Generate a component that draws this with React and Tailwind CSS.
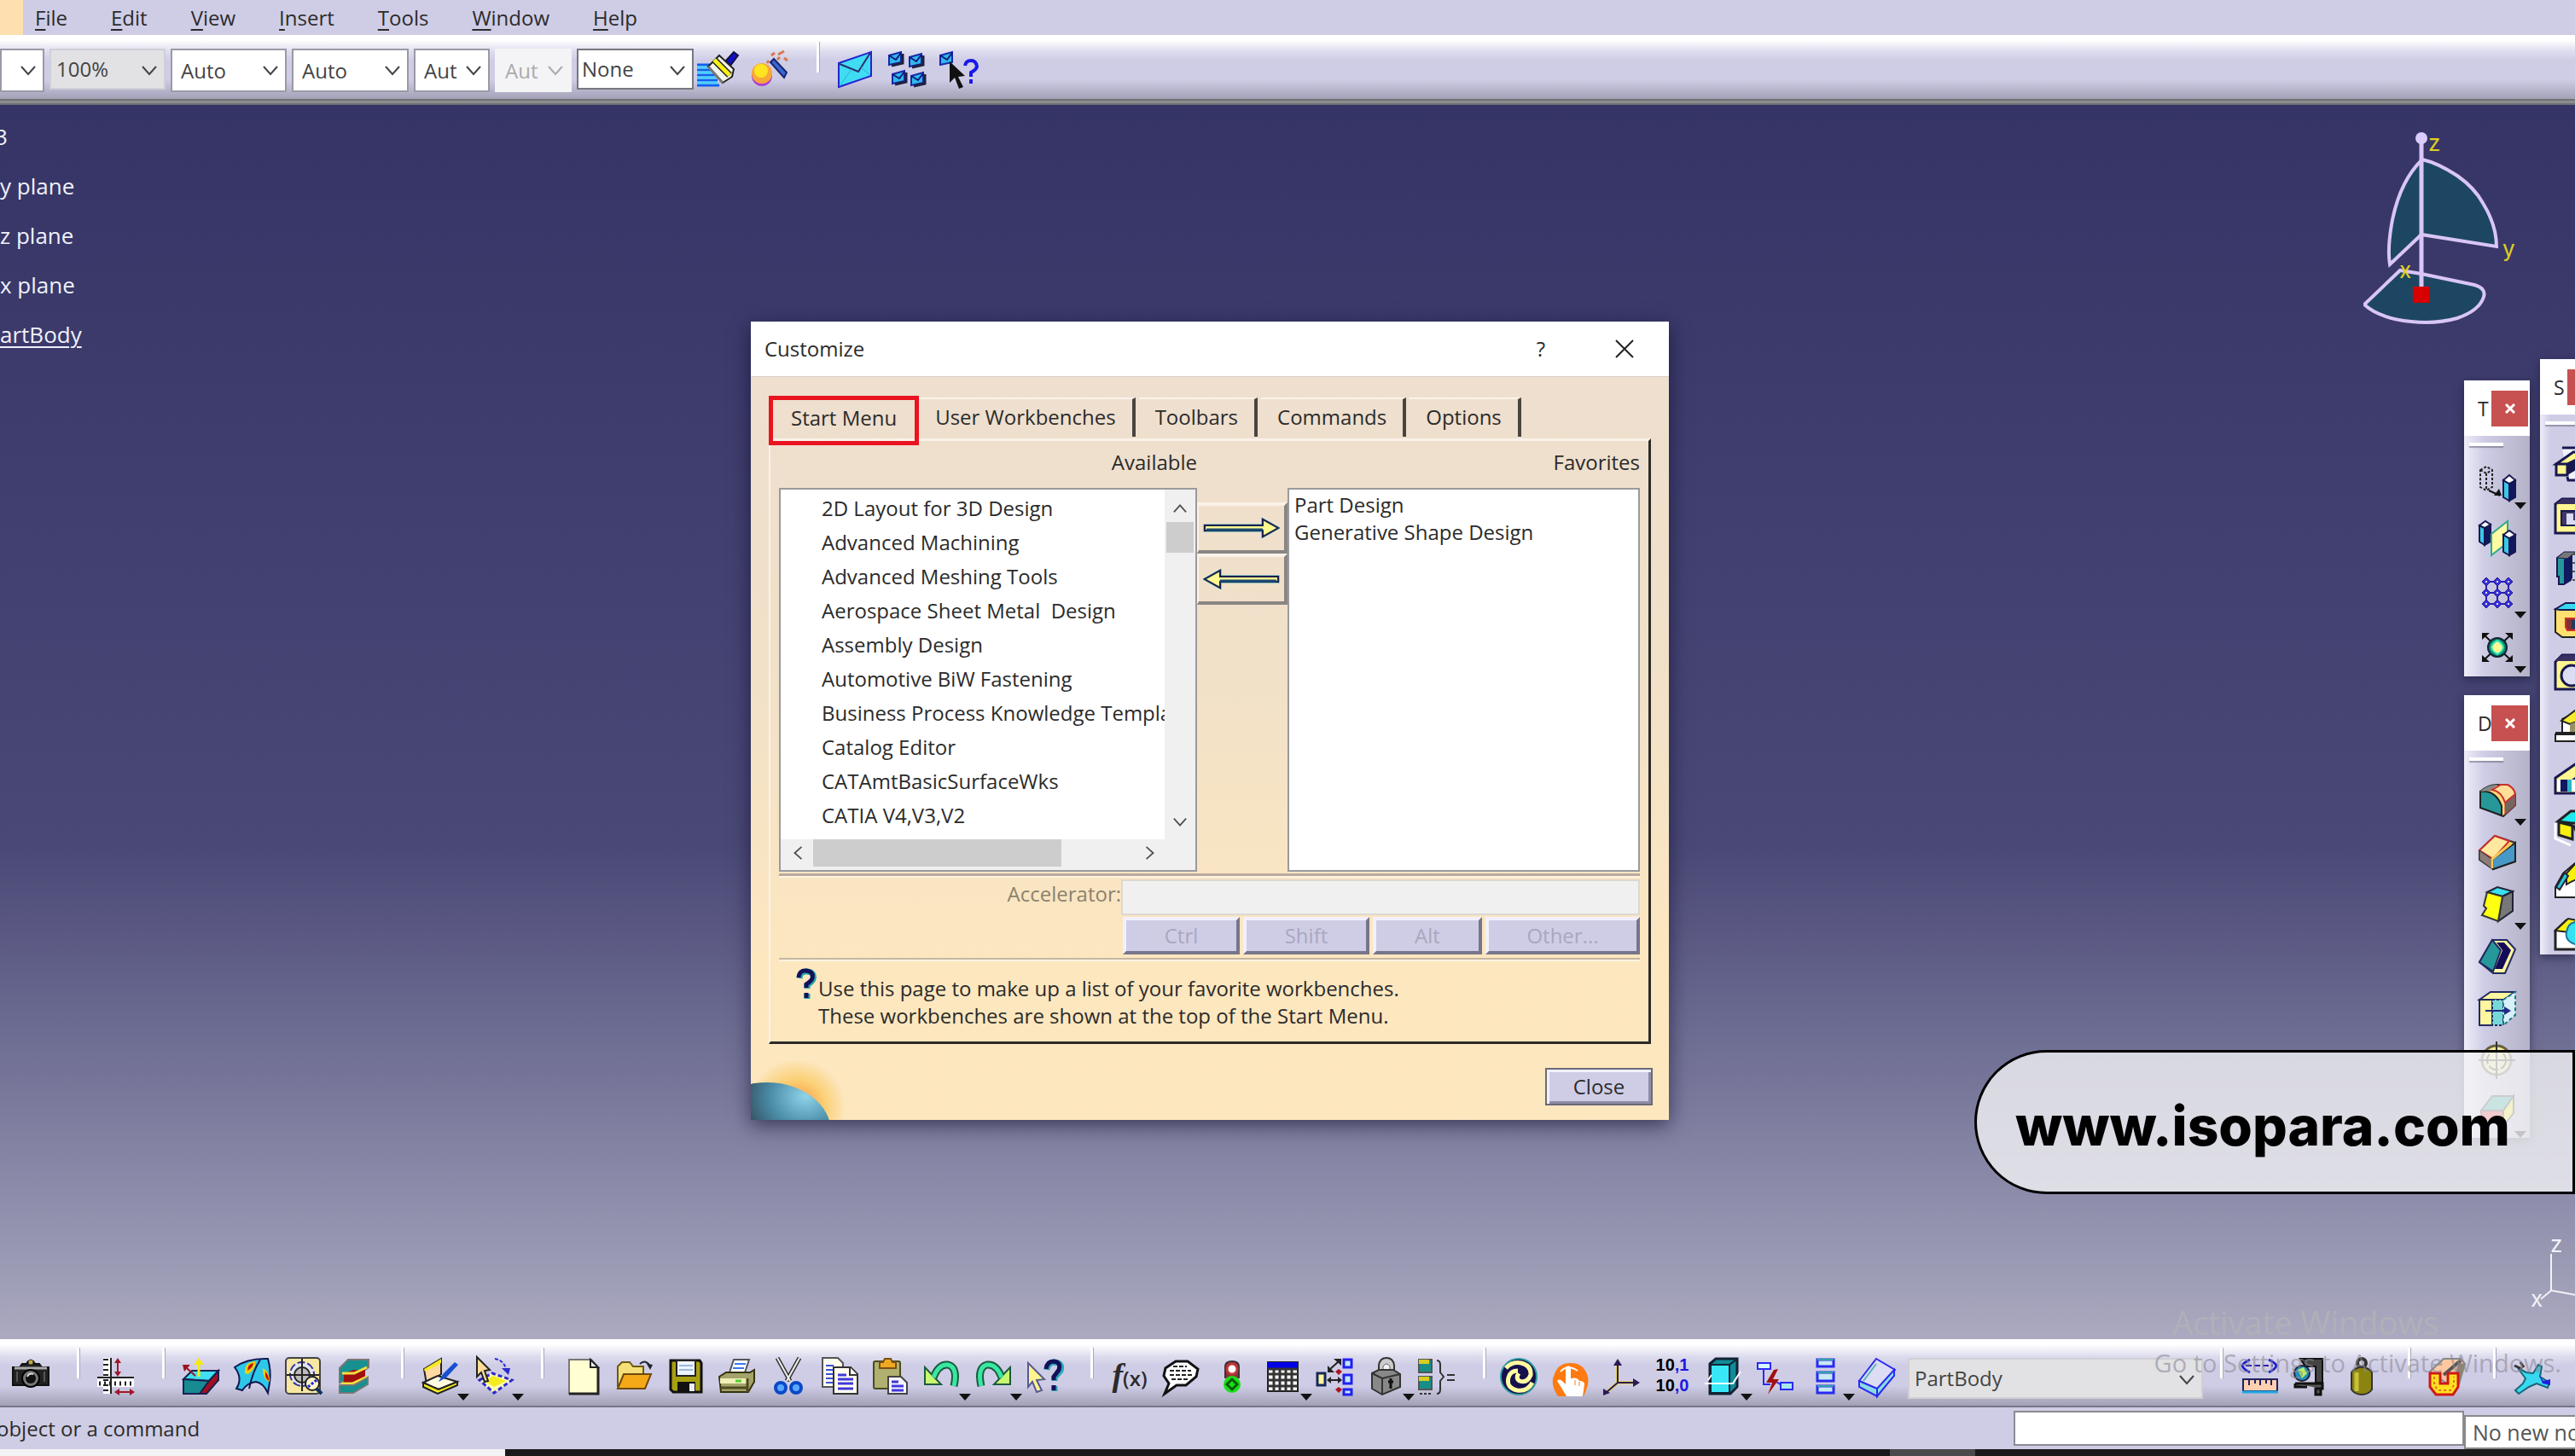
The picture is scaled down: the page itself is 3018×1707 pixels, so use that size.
import React, { useState } from 'react';

const WORKBENCHES = [
  '2D Layout for 3D Design',
  'Advanced Machining',
  'Advanced Meshing Tools',
  'Aerospace Sheet Metal  Design',
  'Assembly Design',
  'Automotive BiW Fastening',
  'Business Process Knowledge Templates',
  'Catalog Editor',
  'CATAmtBasicSurfaceWks',
  'CATIA V4,V3,V2',
];

const FAVORITES = ['Part Design', 'Generative Shape Design'];
const MENUS = ['File', 'Edit', 'View', 'Insert', 'Tools', 'Window', 'Help'];
const TABS = ['Start Menu', 'User Workbenches', 'Toolbars', 'Commands', 'Options'];

// Every glyph is drawn on a 44x44 canvas
const GLYPHS = {
  camera: (
    <>
      <path d="M1 13h8l3-4h5l2-3h6l2 3h5l3 4h8v21H1z" fill="#222" stroke="#111" strokeWidth="2" />
      <path d="M3 14h38" stroke="#aaa" strokeWidth="3" />
      <circle cx="22" cy="7" r="3" fill="#c9a93c" stroke="#333" />
      <circle cx="22" cy="26" r="10" fill="#777" stroke="#000" strokeWidth="2" />
      <circle cx="22" cy="26" r="6" fill="#111" />
      <path d="M18 24q2-5 7-3" stroke="#ddd" strokeWidth="2" fill="none" />
      <path d="M6 18v12M38 18v12" stroke="#555" strokeWidth="2" />
    </>
  ),
  rulers: (
    <>
      <path d="M7 2h9v42H7zM0 25h43v11H0z" fill="#fff" />
      <path d="M16 2v42M0 25h43" stroke="#222" strokeWidth="2" />
      <path d="M10 3v40" stroke="#222" strokeWidth="6" strokeDasharray="2 4" />
      <path d="M2 32h40" stroke="#222" strokeWidth="5" strokeDasharray="2 4" />
      <path d="M24 4v18M22 42h20" stroke="#a01828" strokeWidth="2" />
      <path d="M20 8l4-6 4 6zM20 18l4 6 4-6zM26 38l-6 4 6 4zM38 38l6 4-6 4z" fill="#a01828" />
    </>
  ),
  draftBlock: (
    <>
      <path d="M1 27l10-10h31l-11 12z" fill="#3fe0f0" stroke="#1a2050" strokeWidth="2" />
      <path d="M1 27l30 2-8 15H1z" fill="#178a92" stroke="#1a2050" strokeWidth="2" />
      <path d="M42 17L31 29 20 44h8l14-16z" fill="#a01020" stroke="#1a2050" strokeWidth="2" />
      <path d="M19 24V8" stroke="#f5ea10" strokeWidth="3" />
      <path d="M13 10l6-8 6 8z" fill="#f5ea10" />
      <path d="M15 23L5 14" stroke="#a01020" strokeWidth="2" />
      <path d="M0 10h9l-7 8z" fill="#a01020" />
    </>
  ),
  curvature: (
    <>
      <path d="M1 13Q16 2 40 3q4 14 2 28l-2 12q-6-12-14-13-10 1-16 10l-7-2Q11 26 1 13z" fill="#2cc8ea" stroke="#101850" strokeWidth="2" />
      <path d="M13 20Q12 7 25 6q2 7-8 15z" fill="#f0d000" />
      <path d="M16 17q0-8 7-9 0 5-7 9z" fill="#c01010" />
      <path d="M34 14q8 4 8 16-8-2-8-16z" fill="#f0d000" />
      <path d="M37 18q4 4 4 11-5-3-4-11z" fill="#c01010" />
      <path d="M31 4Q22 18 18 38" stroke="#101850" strokeWidth="2" fill="none" />
    </>
  ),
  tapThread: (
    <>
      <rect x="1" y="2" width="40" height="42" rx="4" fill="#f7e7a0" stroke="#444" strokeWidth="2" />
      <circle cx="20" cy="21" r="14" fill="#e4e4ee" stroke="#3030a0" strokeWidth="2" strokeDasharray="9 3" />
      <circle cx="20" cy="22" r="9" fill="#bbb" stroke="#222" strokeWidth="2" />
      <path d="M20 3v38M2 22h38" stroke="#222" strokeWidth="2" />
      <circle cx="32" cy="32" r="8" fill="#fff6c8" stroke="#222" strokeWidth="2" />
      <path d="M27 36l10-8" stroke="#2020e0" strokeWidth="3" strokeDasharray="3 2" />
      <path d="M37 38l6 6" stroke="#103060" strokeWidth="4" />
    </>
  ),
  wallThickness: (
    <>
      <path d="M4 14L14 4h24v9L26 22H12v8l-8 1z" fill="#179090" stroke="#777" strokeWidth="2" />
      <path d="M9 20L20 16h14v14l-12 4H9z" fill="#a01010" />
      <path d="M7 20h14l15-7M6 32h13l17-8" stroke="#f2e040" strokeWidth="3" fill="none" />
      <path d="M4 34h17l16-9v8L20 43H4z" fill="#179090" stroke="#777" strokeWidth="2" />
    </>
  ),
  sketch: (
    <>
      <path d="M3 15L23 3v18L6 33z" fill="#ffd9a0" stroke="#222" strokeWidth="2" />
      <path d="M3 15L23 3v5L4 18z" fill="#f5ec20" />
      <path d="M2 31l17-8 23 7-22 9z" fill="#fffde0" stroke="#222" strokeWidth="2" />
      <path d="M2 31v5l17 8 23-10v-4l-22 9z" fill="#f5ec20" stroke="#222" strokeWidth="2" />
      <path d="M20 30l5-9L39 7l4 3-14 15z" fill="#1750d0" />
    </>
  ),
  positionedSketch: (
    <>
      <path d="M4 28l15-8 23 8-21 15z" fill="#fffbb0" stroke="#2a2ad0" strokeWidth="3" strokeDasharray="5 3" />
      <path d="M10 29l10-6 15 6-14 7z" fill="#f5ec20" />
      <path d="M1 1l15 15-6 1 4 12-4 1-4-11-5 5z" fill="#ffdc98" stroke="#222" strokeWidth="2" />
      <path d="M22 3q11 2 14 14" stroke="#2a2ad0" strokeWidth="2" strokeDasharray="4 2" fill="none" />
      <path d="M30 14h10l-2 8z" fill="#2a2ad0" />
    </>
  ),
  newFile: (
    <>
      <path d="M5 4h26l8 9v31H5z" fill="#ffffd2" stroke="#777" strokeWidth="2" />
      <path d="M39 13v31H5" stroke="#222" strokeWidth="3" fill="none" />
      <path d="M30 4v9h9z" fill="#fff" stroke="#222" strokeWidth="2" />
    </>
  ),
  openFile: (
    <>
      <path d="M2 36V12l5-5h9l4 5h12v10" fill="#f5df78" stroke="#6d5a10" strokeWidth="2" />
      <path d="M2 38l7-17h32l-7 17z" fill="#f5a818" stroke="#6d4a10" strokeWidth="2" />
      <path d="M28 9q7-6 12 3" stroke="#223" strokeWidth="2" fill="none" />
      <path d="M36 9l7 1-3 6z" fill="#223" />
    </>
  ),
  save: (
    <>
      <path d="M4 5h34l2 3v34H7l-3-3z" fill="#a8a010" stroke="#111" strokeWidth="3" />
      <path d="M11 5h22v18H11z" fill="#eef4ff" stroke="#222" strokeWidth="2" />
      <path d="M14 11h16M14 16h16" stroke="#9db8e0" strokeWidth="2" />
      <path d="M12 30h21v12H12z" fill="#111" />
      <path d="M26 32h6v9h-6z" fill="#eee" />
    </>
  ),
  print: (
    <>
      <path d="M12 22l6-18h18l-6 18z" fill="#fff" stroke="#555" strokeWidth="2" />
      <path d="M19 9h13M17 14h13M16 19h12" stroke="#3478f0" strokeWidth="2" />
      <path d="M1 24l8-5h28l5-3v14l-7 12H3z" fill="#a3a36a" stroke="#33330f" strokeWidth="2" />
      <path d="M2 26h32v6H2z" fill="#eef0b8" />
      <path d="M3 37h30M34 26v16" stroke="#4c4c20" strokeWidth="3" />
      <path d="M20 29h7" stroke="#50d030" strokeWidth="3" />
    </>
  ),
  cut: (
    <>
      <path d="M9 2l15 27M35 2L20 29" stroke="#333" strokeWidth="5" />
      <path d="M9 2l15 27M35 2L20 29" stroke="#eee" strokeWidth="2" />
      <circle cx="13" cy="37" r="6" fill="#5aa8ff" stroke="#0a48c8" strokeWidth="4" />
      <circle cx="31" cy="37" r="6" fill="#5aa8ff" stroke="#0a48c8" strokeWidth="4" />
    </>
  ),
  copy: (
    <>
      <path d="M2 2h18l6 6v28H2z" fill="#fffff0" stroke="#555" strokeWidth="2" />
      <path d="M6 11h9M6 16h9M6 21h9M6 26h9M6 31h9" stroke="#3a50d8" strokeWidth="2" />
      <path d="M15 13h20l8 8v23H15z" fill="#fffff0" stroke="#333" strokeWidth="2" />
      <path d="M34 13v9h9" fill="#fff" stroke="#333" strokeWidth="2" />
      <path d="M20 22h10M20 27h18M20 32h18M20 38h18" stroke="#4038d8" strokeWidth="3" />
    </>
  ),
  paste: (
    <>
      <rect x="2" y="6" width="31" height="32" rx="2" fill="#b0b070" stroke="#4a4a20" strokeWidth="2" />
      <path d="M9 11v-4h4l2-4h7l2 4h4v7H9z" fill="#f0a820" stroke="#7a5010" strokeWidth="2" />
      <path d="M19 24h15l7 7v13H19z" fill="#f4f4ff" stroke="#444" strokeWidth="2" />
      <path d="M23 30h8M23 35h14M23 40h14" stroke="#4038d8" strokeWidth="3" />
    </>
  ),
  undo: (
    <>
      <path d="M12 25Q18 9 29 10q12 3 7 25" stroke="#1c5a40" strokeWidth="9" fill="none" />
      <path d="M2 13v20h19z" fill="#c8f870" stroke="#1c5a40" strokeWidth="2" />
      <path d="M12 25Q18 9 29 10q12 3 7 25" stroke="#38e8a0" strokeWidth="5" fill="none" />
    </>
  ),
  redo: (
    <>
      <path d="M32 25Q26 9 15 10 3 13 8 35" stroke="#1c5a40" strokeWidth="9" fill="none" />
      <path d="M42 13v20H23z" fill="#c8f870" stroke="#1c5a40" strokeWidth="2" />
      <path d="M32 25Q26 9 15 10 3 13 8 35" stroke="#38e8a0" strokeWidth="5" fill="none" />
    </>
  ),
  whatsThis: (
    <>
      <path d="M3 8l19 19-9 1 6 12-6 2-5-12-5 6z" fill="#fff490" stroke="#555a90" strokeWidth="2" />
      <path d="M25 16q1-9 9-9 10 1 7 10l-7 8v4M34 35v6" stroke="#28a8b8" strokeWidth="7" fill="none" />
      <path d="M24 15q1-9 9-9 9 1 6 10l-6 8v4M33 34v6" stroke="#14105a" strokeWidth="5" fill="none" />
    </>
  ),
  bubble: (
    <>
      <path d="M16 6h14l12 9-2 9-12 10H17L3 44l5-12-6-9 2-9z" fill="#fff" stroke="#111" strokeWidth="3" />
      <path d="M13 12h16M9 17h25M9 22h26M11 27h20" stroke="#222" strokeWidth="2" strokeDasharray="5 2" />
    </>
  ),
  trafficLight: (
    <>
      <path d="M14 26V12q0-6 8-6t8 6v14" fill="#8a3038" stroke="#45303a" strokeWidth="2" />
      <circle cx="22" cy="15" r="6" fill="#fff" stroke="#c03838" strokeWidth="3" />
      <circle cx="22" cy="33" r="10" fill="#18e018" />
      <path d="M22 27l6 6-6 6-6-6z" fill="#18e018" stroke="#0a5a0a" strokeWidth="3" />
    </>
  ),
  table: (
    <>
      <path d="M4 7h35v34H4z" fill="#fff" stroke="#222" strokeWidth="2" />
      <path d="M4 7h35v7H4z" fill="#0000e8" />
      <path d="M4 15h35M4 21h35M4 28h35M4 35h35M11 14v27M18 14v27M25 14v27M32 14v27" stroke="#333" strokeWidth="3" />
    </>
  ),
  relations: (
    <>
      <path d="M2 20h9v14H2z" fill="#fff6a0" stroke="#182858" strokeWidth="3" />
      <path d="M33 4h9v9h-9zM33 22h9v10h-9zM33 39h9v6h-9z" fill="#bfe8ff" stroke="#2020f0" strokeWidth="3" />
      <path d="M16 16L27 6M15 28h14" stroke="#222" strokeWidth="2" />
      <path d="M21 3h9v8zM14 11v8h8zM18 24l-5 4 5 4zM26 24l5 4-5 4z" fill="#222" />
      <path d="M23 18l4-3 4 3-4 4zM23 39l4-3 4 3-4 4z" fill="#b01020" />
    </>
  ),
  lock: (
    <>
      <path d="M14 21V11q1-9 9-9t9 9v12" fill="#ccc" stroke="#333" strokeWidth="2" />
      <path d="M19 22V12q4-6 8 0v10" fill="#f2f2f2" stroke="#666" />
      <path d="M6 20l8-4h17l8 5v15l-21 9-12-7z" fill="#888" stroke="#333" strokeWidth="2" />
      <path d="M6 20l12 6 21-5M18 26v18" stroke="#333" strokeWidth="2" fill="none" />
      <path d="M28 26v12M25 30h6" stroke="#111" strokeWidth="3" />
    </>
  ),
  equations: (
    <>
      <path d="M1 4h15v15H1zM1 24h15v15H1z" fill="#178f88" stroke="#555" strokeWidth="2" />
      <path d="M1 4h12v5H1zM1 24h12v5H1z" fill="#d8cc20" />
      <path d="M2 44h13" stroke="#333" strokeWidth="2" strokeDasharray="3 2" />
      <path d="M22 5q4 0 4 5v9l4 5-4 5v10q0 5-4 5M34 22h9M34 28h9" stroke="#333" strokeWidth="2" fill="none" />
    </>
  ),
  update: (
    <>
      <circle cx="22" cy="24" r="21" fill="#14104e" stroke="#2a9aa0" strokeWidth="2" />
      <path d="M7 14Q14 6 25 8q12 3 11 14-4 10-13 7-5-3-1-9" stroke="#fffba0" strokeWidth="5" fill="none" />
      <path d="M38 31Q32 42 20 40 7 37 10 25q2-8 11-8" stroke="#fffba0" strokeWidth="5" fill="none" />
    </>
  ),
  hand: (
    <>
      <path d="M8 47Q-2 32 4 21q4-13 19-13 14 0 19 13 3 8 0 16l-4 10H10z" fill="#ff7a10" />
      <path d="M18 47l-6-10-5-8q3-4 8 2l2 2V13q4-4 6 1v12q8-2 10 3 6 0 6 4l-2 14z" fill="#fff" />
      <path d="M11 18q8-9 20-1" stroke="#fff" strokeWidth="2" fill="none" />
      <path d="M28 28v6M33 30v5" stroke="#ff7a10" strokeWidth="1" />
    </>
  ),
  axes: (
    <>
      <path d="M18 5v26h22M18 31L4 43" stroke="#e8d860" strokeWidth="4" fill="none" />
      <path d="M18 5v26h22M18 31L4 43" stroke="#2a1a58" strokeWidth="2" fill="none" />
      <path d="M13 11l5-8 5 8zM36 26l8 5-8 5zM1 38v8l8-3z" fill="#2a1a58" />
    </>
  ),
  section: (
    <>
      <path d="M6 9l7-6h25v33l-8 8H6z" fill="#128a98" stroke="#123" strokeWidth="3" />
      <path d="M7 10h22v33H7z" fill="#38e8f8" stroke="#123" strokeWidth="2" />
      <path d="M29 10l8-6" stroke="#123" strokeWidth="2" />
      <path d="M0 32h33l9-14M4 28l4-6" stroke="#fff" strokeWidth="2" fill="none" />
    </>
  ),
  breakLink: (
    <>
      <path d="M2 8h15v7H2z" fill="#d8f4ff" stroke="#2a2af0" strokeWidth="2" />
      <path d="M9 15v18h8M24 30l6 4" stroke="#2a2af0" strokeWidth="2" fill="none" />
      <path d="M29 31h14v8H29z" fill="#a8e8f0" stroke="#2a2af0" strokeWidth="2" />
      <path d="M21 16l-9 15h7l-5 14 13-18h-7l6-12z" fill="#a01010" />
    </>
  ),
  stack: (
    <>
      <path d="M12 4h19v8H12zM12 19h19v10H12zM12 35h19v8H12z" fill="#c8e8f4" stroke="#2a2af0" strokeWidth="3" />
      <path d="M12 4h19M12 19h19M12 35h19" stroke="#30a0a8" strokeWidth="2" />
    </>
  ),
  body: (
    <>
      <path d="M1 29L21 3l22 13-20 23z" fill="#dcdcf4" stroke="#2a2af0" strokeWidth="2" />
      <path d="M1 29v7l21 11V38zM22 47l20-24v-7L22 38z" fill="#8adce0" stroke="#2a2af0" strokeWidth="2" />
      <path d="M6 29L21 9" stroke="#50b8b8" strokeWidth="2" />
    </>
  ),
  ruler: (
    <>
      <path d="M6 11h32" stroke="#2a20a8" strokeWidth="2" strokeDasharray="7 3" />
      <path d="M11 4q-8 4-9 7 1 4 9 8M33 4q8 4 9 7-1 4-9 8" stroke="#2020d0" strokeWidth="3" fill="none" />
      <path d="M3 27h40v14H3z" fill="#ffd0b0" stroke="#202060" strokeWidth="2" />
      <path d="M2 42h42" stroke="#20a8e0" strokeWidth="3" />
      <path d="M10 28v6M17 28v4M23 28v6M30 28v4M36 28v6" stroke="#202060" strokeWidth="2" />
    </>
  ),
  clamp: (
    <>
      <path d="M10 3h26v28h-8V12H16z" fill="#444" stroke="#111" strokeWidth="2" />
      <path d="M4 32h32v6h-8v7h6v-7M4 32v4h14" fill="#555" stroke="#111" strokeWidth="3" />
      <circle cx="12" cy="20" r="9" fill="#2090c0" stroke="#223" strokeWidth="2" />
      <path d="M7 16l7-3 4 7-6 6z" fill="#b8f060" />
    </>
  ),
  weight: (
    <>
      <circle cx="22" cy="8" r="5" fill="none" stroke="#333" strokeWidth="4" />
      <path d="M10 19q4-6 12-6t12 6v20q-4 6-12 6t-12-6z" fill="#8c8410" stroke="#333" strokeWidth="2" />
      <path d="M16 19v22" stroke="#c8c038" strokeWidth="5" />
    </>
  ),
  groove: (
    <>
      <path d="M2 18L18 3h20l5 6-7 24-10 2z" fill="#ffc8a0" stroke="#888" strokeWidth="2" />
      <path d="M36 8l7 1-7 24-4 2V20z" fill="#8c8478" />
      <path d="M18 22L38 5" stroke="#555" strokeWidth="4" />
      <path d="M2 20h12v12h9V20h12v16l-6 9H9l-7-9z" fill="#ffe020" stroke="#d01818" strokeWidth="3" />
      <path d="M7 24v10l5 6h14l4-6V24" stroke="#e87018" strokeWidth="2" strokeDasharray="3 3" fill="none" />
    </>
  ),
  plane: (
    <>
      <path d="M5 14l10 5 8 1 6-10 4 2-2 12 11 7-2 6-13-5-9 4-12 8-4-4 9-8 3-6z" fill="#38d8f0" stroke="#186878" strokeWidth="2" />
      <path d="M1 11l9 4M8 7l4 6" stroke="#333" strokeWidth="3" />
      <path d="M30 22l5 7 8-2v7l-9-2z" fill="#2020e0" />
    </>
  ),
  paintBrush: (
    <>
      <path d="M0 17h16M0 23h18M0 29h22M0 35h24M0 41h26" stroke="#1060f0" strokeWidth="3" />
      <path d="M0 20h14M0 26h18M0 32h22M0 38h24" stroke="#48d0ff" strokeWidth="3" />
      <path d="M34 12l9-10 5 4-9 12z" fill="#1010c8" stroke="#101040" strokeWidth="2" />
      <path d="M26 6l17 16-2 9-11 7L13 19z" fill="#f4f4ec" stroke="#222" strokeWidth="2" />
      <path d="M20 11l18 18" stroke="#222" strokeWidth="8" />
      <path d="M20 11l18 18" stroke="#f8f010" strokeWidth="5" />
      <path d="M13 19l17 19" stroke="#777" strokeWidth="3" />
    </>
  ),
  wand: (
    <>
      <circle cx="12" cy="30" r="12" fill="#b040d0" />
      <circle cx="12" cy="27" r="12" fill="#f7a838" />
      <circle cx="11" cy="24" r="8" fill="#ffe420" />
      <path d="M22 14l4-4 15 16-3 6z" fill="#3868d0" stroke="#1a2470" strokeWidth="2" />
      <path d="M23 6l4-3M31 5l7-4M20 12l-2 3M38 9l4 3M30 11l3-3" stroke="#d87850" strokeWidth="3" />
    </>
  ),
  mail: (
    <>
      <path d="M2 15L40 2v28L2 43z" fill="#40dcf4" stroke="#2424d0" strokeWidth="2" />
      <path d="M3 16l22 9L39 3" stroke="#28306c" strokeWidth="2" fill="none" />
      <path d="M3 42l14-20M39 29L28 20" stroke="#30b0d0" strokeWidth="1" fill="none" />
    </>
  ),
  mailGrid: (
    <>
      <path d="M1 6l14-4v12L1 17zM25 8l14-4v12l-14 3zM5 28l14-4v12L5 39zM27 30l14-4v12l-14 3z" fill="#30b8e8" stroke="#1428a8" strokeWidth="2" />
      <path d="M17 4v11L4 18M41 6v11l-13 3M21 26v11L8 40M43 28v11l-13 3" stroke="#202040" strokeWidth="3" fill="none" />
      <path d="M1 6l8 5 6-8M25 8l8 5 6-8M5 28l8 5 6-8M27 30l8 5 6-8" stroke="#101880" strokeWidth="2" fill="none" />
    </>
  ),
  mailHelp: (
    <>
      <path d="M1 6l14-4v12L1 17z" fill="#30b8e8" stroke="#1428a8" strokeWidth="2" />
      <path d="M1 6l8 5 6-8" stroke="#101880" strokeWidth="2" fill="none" />
      <path d="M12 13l18 17-8 1 6 12-5 2-5-13-6 6z" fill="#111" />
      <path d="M30 18q1-6 7-6t7 7q-1 4-7 7v5M37 34v5" stroke="#1818e8" strokeWidth="4" fill="none" />
    </>
  ),
  translate: (
    <>
      <path d="M2 6l7-4 7 4v20l-7 4-7-4zM2 6l7 4 7-4M9 10v20" fill="none" stroke="#222" strokeWidth="2" strokeDasharray="3 2" />
      <path d="M12 30l13 6" stroke="#111" strokeWidth="2" />
      <path d="M18 36h9l-3-8z" fill="#111" />
      <path d="M29 18l7 4v20l-7-4z" fill="#38c8e8" stroke="#181850" strokeWidth="2" />
      <path d="M36 22l7-4v20l-7 4z" fill="#101860" stroke="#181850" strokeWidth="2" />
      <path d="M29 18l7-6 7 6-7 4z" fill="#fff" stroke="#181850" strokeWidth="2" />
    </>
  ),
  mirror: (
    <>
      <path d="M1 7l6 3v20l-6-4z" fill="#38c8e8" stroke="#181850" strokeWidth="2" />
      <path d="M7 10l7-4v20l-7 4z" fill="#101860" stroke="#181850" strokeWidth="2" />
      <path d="M1 7l7-5 6 4-7 4z" fill="#fff" stroke="#181850" strokeWidth="2" />
      <path d="M15 17L34 2v25L15 42z" fill="#fffba0" stroke="#30a890" strokeWidth="2" />
      <path d="M29 18l7 4v20l-7-4z" fill="#38c8e8" stroke="#181850" strokeWidth="2" />
      <path d="M36 22l7-4v20l-7 4z" fill="#101860" stroke="#181850" strokeWidth="2" />
      <path d="M29 18l7-5 7 5-7 4z" fill="#fff" stroke="#181850" strokeWidth="2" />
    </>
  ),
  pattern: (
    <>
      <path d="M9 5v34M22 5v34M35 5v34M5 9h34M5 22h34M5 35h34" stroke="#2a20b8" strokeWidth="2" />
      <path d="M9 4l5 5-5 5-5-5zM22 4l5 5-5 5-5-5zM35 4l5 5-5 5-5-5zM9 17l5 5-5 5-5-5zM22 17l5 5-5 5-5-5zM35 17l5 5-5 5-5-5zM9 30l5 5-5 5-5-5zM22 30l5 5-5 5-5-5zM35 30l5 5-5 5-5-5z" fill="#3a30d8" stroke="#1a1a90" />
      <path d="M8 9h2M21 9h2M34 9h2M8 22h2M21 22h2M34 22h2M8 35h2M21 35h2M34 35h2" stroke="#ddd" strokeWidth="2" />
    </>
  ),
  scale: (
    <>
      <path d="M6 7l32 30M38 7L6 37" stroke="#111" strokeWidth="2" />
      <path d="M4 5h9l-9 8zM40 5h-9l9 8zM4 39h9l-9-8zM40 39h-9l9-8z" fill="#111" />
      <circle cx="22" cy="22" r="11" fill="#108868" stroke="#123" strokeWidth="2" />
      <path d="M22 14q6 3 7 8-1 5-7 8-6-3-7-8 1-5 7-8z" fill="#fff890" stroke="#30e8c0" strokeWidth="2" />
    </>
  ),
  fillet: (
    <>
      <path d="M2 12q10-9 22-8l12 2 7 9v13L29 41 2 30z" fill="#fbd878" stroke="#333" strokeWidth="2" />
      <path d="M2 12q18-2 25 17v11L2 31z" fill="#27989a" stroke="#222" strokeWidth="2" />
      <path d="M2 12Q10 4 22 4l-7 7z" fill="#888" />
      <path d="M16 10l10-6h8q8 4 9 11L31 25Q27 12 16 10z" fill="#ffdf98" stroke="#c83030" strokeWidth="2" />
      <path d="M31 26l12-10v12L31 39z" fill="#706860" stroke="#c83030" />
    </>
  ),
  chamfer: (
    <>
      <path d="M1 20L19 3l24 8v22L17 42 1 31z" fill="#fbd878" stroke="#333" strokeWidth="2" />
      <path d="M1 20L19 3l17 6-19 21z" fill="#ffe8a0" stroke="#c83030" strokeWidth="2" />
      <path d="M43 11v22l-26 9V30z" fill="#4898c8" stroke="#222" strokeWidth="2" />
      <path d="M1 20l14 10v11L1 31z" fill="#8a7c78" stroke="#333" />
      <path d="M16 41V30l22-18" stroke="#fbc850" strokeWidth="3" fill="none" />
    </>
  ),
  draft: (
    <>
      <path d="M10 8l12-6 18 5-12 6z" fill="#38e0f0" stroke="#223" strokeWidth="2" />
      <path d="M28 13l12-6v23L23 42z" fill="#777" stroke="#223" strokeWidth="2" />
      <path d="M10 8l18 5-5 29-19-7 5-8-3-3z" fill="#ffff10" stroke="#333" strokeWidth="2" />
    </>
  ),
  shell: (
    <>
      <path d="M1 29L16 3h17l10 11-12 28H17z" fill="#fff6a0" stroke="#222a60" strokeWidth="2" />
      <path d="M16 3L1 29l16 11 9-25z" fill="#27989a" stroke="#222a60" strokeWidth="2" />
      <path d="M21 6h9l8 9-10 22h-9l9-22z" fill="#140c58" />
    </>
  ),
  thickness: (
    <>
      <path d="M1 12l13-9h28l-12 9z" fill="#fff6a0" stroke="#222a60" strokeWidth="2" />
      <path d="M1 12h15v30H1z" fill="#fff6a0" stroke="#222a60" strokeWidth="2" />
      <path d="M16 12h13v30H16z" fill="#78d8d8" stroke="#222a60" strokeWidth="2" strokeDasharray="3 2" />
      <path d="M29 12l14-9v27L29 42z" fill="#d8f0f8" stroke="#1a7888" strokeWidth="2" strokeDasharray="4 3" />
      <path d="M8 25h26" stroke="#222a80" strokeWidth="2" />
      <path d="M30 20l8 5-8 5z" fill="#222a80" />
    </>
  ),
  thread: (
    <>
      <circle cx="21" cy="22" r="17" fill="#f5eca0" stroke="#6a6040" strokeWidth="3" />
      <circle cx="21" cy="22" r="11" fill="none" stroke="#333" strokeWidth="2" strokeDasharray="12 3" />
      <path d="M21 0v44M0 22h43" stroke="#333" strokeWidth="2" />
    </>
  ),
  removeFace: (
    <>
      <path d="M3 20L16 3h25L29 20z" fill="#27a890" stroke="#333" strokeWidth="2" />
      <path d="M29 20L41 3v20L29 38z" fill="#f8f020" stroke="#333" strokeWidth="2" />
      <path d="M3 20h26v18l-13-6-13 8z" fill="#e83030" stroke="#333" strokeWidth="2" />
    </>
  ),
  pad: (
    <>
      <path d="M9 3h34v38H16l-1-4" fill="#f2f2ff" stroke="#181850" strokeWidth="3" />
      <path d="M2 22L22 8h22L15 22zM2 22h13v13H2z" fill="#fff690" stroke="#181850" strokeWidth="3" />
      <path d="M15 22L44 8v10L15 35z" fill="#181850" />
    </>
  ),
  pocket: (
    <>
      <path d="M1 8l8-6h35v40H1z" fill="#fff690" stroke="#181850" strokeWidth="3" />
      <path d="M1 8l8-6h35v6z" fill="#383060" />
      <path d="M8 16h36v17H8z" fill="#403868" stroke="#181850" strokeWidth="2" />
      <path d="M14 19h8v8h22v5H14z" fill="#dcdcf2" />
    </>
  ),
  rib: (
    <>
      <path d="M3 10l7-5 9-1v32l-8 5H5v-9H3z" fill="#27989a" stroke="#181850" strokeWidth="2" />
      <path d="M11 12l10-8v30l-10 7z" fill="#101860" />
      <path d="M3 10l8-7h14l-10 8z" fill="#777" stroke="#181850" />
      <path d="M21 6h23M21 16h23M21 26h23M21 36h23" stroke="#555" strokeWidth="2" strokeDasharray="3 2" />
    </>
  ),
  slot: (
    <>
      <path d="M1 9v27l8 6h35V9z" fill="#ffe070" stroke="#222" strokeWidth="2" />
      <path d="M1 9l12-7h31v8H6z" fill="#38d8f0" stroke="#181850" strokeWidth="2" />
      <path d="M13 20h31v14H15l-2-4z" fill="#803030" stroke="#c83030" strokeWidth="2" />
      <path d="M20 22h24v10H20z" fill="#203a60" />
    </>
  ),
  hole: (
    <>
      <path d="M1 10l8-8h35v40H1z" fill="#fff690" stroke="#181850" strokeWidth="3" />
      <path d="M1 9l8-7h35v7z" fill="#383060" />
      <circle cx="20" cy="26" r="12" fill="#dcdcf2" stroke="#181850" strokeWidth="3" />
    </>
  ),
  stiffener: (
    <>
      <path d="M1 34h8V16L36 2h8v40H1z" fill="#fff" stroke="#222" strokeWidth="2" />
      <path d="M8 18L28 3h16v8L18 22z" fill="#f5ec30" stroke="#222" strokeWidth="2" />
      <path d="M18 22l26-11v20H18z" fill="#999068" />
      <path d="M1 33h43" stroke="#222" strokeWidth="4" />
    </>
  ),
  loft: (
    <>
      <path d="M1 24L30 4h14v38H1z" fill="#fff690" stroke="#181850" strokeWidth="3" />
      <path d="M3 26h41v14H3z" fill="#fff" />
      <path d="M7 26h8v14H7zM20 26L44 8v18z" fill="#101860" />
      <path d="M15 26h5v14h-5z" fill="#27b8c8" />
    </>
  ),
  solidCombine: (
    <>
      <path d="M4 14L19 2h25v14H20z" fill="#20e8f0" stroke="#222" strokeWidth="3" />
      <path d="M5 15l16 4v16L5 30z" fill="#f8f010" stroke="#222" strokeWidth="3" />
      <path d="M1 16v18l18 8" stroke="#fff" strokeWidth="3" fill="none" />
      <path d="M21 19l23-5v20l-15 4z" fill="#222" />
    </>
  ),
  closeSurface: (
    <>
      <path d="M1 30l9-16L24 2h20v40H1z" fill="#fff" stroke="#222" strokeWidth="2" />
      <path d="M14 14L24 3h20v20q-12-8-30 4z" fill="#f8f010" stroke="#222" strokeWidth="2" />
      <path d="M2 30L12 13l4 4L6 33z" fill="#27c8d8" stroke="#223" strokeWidth="2" />
    </>
  ),
  sew: (
    <>
      <path d="M1 20L14 8l30 12v22H1z" fill="#fff" stroke="#222" strokeWidth="3" />
      <path d="M1 20L16 6l10 2-9 14z" fill="#f8f010" stroke="#222" strokeWidth="2" />
      <path d="M14 22q2-12 12-12 10 2 18 6v12q-6 12-20 8-12-4-10-14z" fill="#38e0f0" stroke="#1878a0" strokeWidth="2" />
    </>
  ),
};

function Glyph({ name }) {
  return (
    <svg viewBox="0 0 44 44" className="size-11 overflow-visible" aria-hidden="true">
      {GLYPHS[name]}
    </svg>
  );
}

function DropMark() {
  return (
    <svg viewBox="0 0 14 8" className="absolute -right-3 -bottom-2 h-2 w-3.5" aria-hidden="true">
      <path d="M0 0h14L7 8z" fill="#111" />
    </svg>
  );
}

function ToolButton({ name, menu, children }) {
  return (
    <button type="button" aria-label={name} className="relative flex size-11 shrink-0 items-center justify-center">
      {children || <Glyph name={name} />}
      {menu && <DropMark />}
    </button>
  );
}

function Separator({ margin = 'mr-5 ml-8' }) {
  return <div className={`h-9 w-1 shrink-0 self-start border-r border-[#a9a8b8] bg-white ${margin}`} />;
}

function Chevron({ className }) {
  return (
    <svg viewBox="0 0 18 12" className={className} fill="none" stroke="currentColor" strokeWidth="2" aria-hidden="true">
      <path d="M1 1l8 9 8-9" />
    </svg>
  );
}

function ComboBox({ label, value, width, box, text }) {
  return (
    <div className={`relative shrink-0 ${width}`}>
      <select
        aria-label={label}
        defaultValue={value}
        className={`w-full appearance-none overflow-hidden pr-9 text-clip outline-none ${box} ${text}`}
      >
        <option value={value}>{value}</option>
      </select>
      <Chevron className={`pointer-events-none absolute top-5 right-2.5 h-3 w-4.5 ${text}`} />
    </div>
  );
}

const WHITE_BOX = 'h-[51px] border-2 border-[#9a9aa6] bg-white pl-2.5';
const GREY_BOX = 'h-12 border-2 border-[#cfcfd6] bg-[#e2e2e4] pl-1.5';
const BAR_FILL = 'bg-[linear-gradient(to_bottom,#ffffff_0%,#ffffff_8%,#dddcee_26%,#cfcde6_40%,#cfcde6_70%,#a3a1b6_100%)]';

function TopBars() {
  return (
    <header className="shrink-0">
      <nav className="flex h-[41px] items-center bg-[#cfcde6]">
        <div className="h-full w-[27px] bg-[#fddfb0]" />
        <ul className="flex items-center gap-[51px] pl-3.5">
          {MENUS.map((menu) => (
            <li key={menu}>
              <button type="button">
                <span className="underline decoration-2 underline-offset-4">{menu[0]}</span>
                {menu.slice(1)}
              </button>
            </li>
          ))}
        </ul>
      </nav>
      <div className={`flex h-[75px] items-start overflow-hidden pt-4 ${BAR_FILL}`}>
        <div className="flex gap-1.5">
          <ComboBox label="Fill colour" value="" width="w-[52px]" box={WHITE_BOX} text="text-[#444]" />
          <ComboBox label="Opacity" value="100%" width="w-[136px]" box={GREY_BOX} text="text-[#444]" />
          <ComboBox label="Line weight" value="Auto" width="w-[136px]" box={WHITE_BOX} text="text-[#444]" />
          <ComboBox label="Line type" value="Auto" width="w-[137px]" box={WHITE_BOX} text="text-[#444]" />
          <ComboBox label="Point symbol" value="Aut" width="w-[89px]" box={WHITE_BOX} text="text-[#444]" />
          <ComboBox label="Rendering" value="Aut" width="w-[90px]" box="h-[51px] bg-[#f4f4f6] pl-3" text="text-[#aaa]" />
          <ComboBox label="Layer" value="None" width="w-[137px]" box="h-12 border-2 border-[#77777f] bg-white pl-1" text="text-[#444]" />
        </div>
        <div className="flex gap-5 pt-0.5 pl-1">
          <ToolButton name="paintBrush" />
          <ToolButton name="wand" />
        </div>
        <div className="-mt-2 mr-5 ml-8 h-9 w-1 shrink-0 border-r border-[#a9a8b8] bg-white" />
        <div className="flex gap-4 pt-0.5">
          <ToolButton name="mail" />
          <ToolButton name="mailGrid" />
          <ToolButton name="mailHelp" />
        </div>
      </div>
      <div className="h-[7px] border-y-2 border-[#6f6f78] bg-[#8c8c8c]" />
    </header>
  );
}

function TreeLabels() {
  return (
    <ul className="flex w-28 flex-col pt-2 text-[26px] leading-[58px] whitespace-nowrap text-[#f0f0fa]">
      <li className="-ml-1.5">3</li>
      <li>y plane</li>
      <li>z plane</li>
      <li>x plane</li>
      <li className="underline decoration-2 underline-offset-4">artBody</li>
    </ul>
  );
}

function Compass() {
  return (
    <svg viewBox="0 0 184 230" className="absolute top-[30px] right-16 h-[230px] w-[184px]" fontFamily="Inter, sans-serif">
      <path d="M69 34Q87 38 110 53q20 14 30 32 16 26 16 51L68 122 31 157Q28 140 33 110 42 60 69 34z" fill="#1d4662" stroke="#d9c6f6" strokeWidth="4" />
      <path d="M1 204l42-40 25 4 62 13q14 4 11 14-5 16-31 25-24 7-54 4-38-4-55-20z" fill="#1d4662" stroke="#d9c6f6" strokeWidth="4" />
      <path d="M68 9v175" stroke="#d9c6f6" strokeWidth="5" />
      <circle cx="68" cy="9" r="7" fill="#d9ccff" />
      <path d="M58 183h19v19H58z" fill="#d80000" />
      <g fill="#e0d020" fontSize="26">
        <text x="76" y="24">z</text>
        <text x="163" y="148">y</text>
        <text x="42" y="173">x</text>
      </g>
    </svg>
  );
}

function AxisMark() {
  return (
    <svg viewBox="0 0 54 84" className="absolute right-0 bottom-9 h-[84px] w-[54px]" fontFamily="Inter, sans-serif">
      <path d="M26 20v43l28 5M26 63L14 73" stroke="#f2f2fa" strokeWidth="2" fill="none" />
      <g fill="#f2f2fa" fontSize="26">
        <text x="25" y="18">z</text>
        <text x="2" y="82">x</text>
      </g>
    </svg>
  );
}

function Palette({ title, place, body, tools, cut }) {
  return (
    <section className={`absolute bg-[#cfcde6] shadow-[0_4px_10px_rgba(20,20,50,0.5)] ${place}`}>
      <header className="flex h-[65px] items-center overflow-hidden bg-white pl-4 text-[23px]">
        <span className="w-4 shrink-0 overflow-hidden">{title}</span>
        <button type="button" aria-label={`Close ${title}`} className="flex h-[42px] w-[43px] shrink-0 items-center justify-center bg-[#c75050] text-white">
          <svg viewBox="0 0 12 12" className="size-3" stroke="currentColor" strokeWidth="3" aria-hidden="true">
            <path d="M1 1l10 10M11 1L1 11" />
          </svg>
        </button>
      </header>
      <div className={`overflow-hidden bg-linear-to-r from-[#efeef8] via-[#cfcde6] via-30% pt-2 ${cut ? 'to-[#cfcde6]' : 'to-[#b4b3c8]'}`}>
        <div className="ml-1.5 h-1 w-10 bg-white shadow-[0_2px_1px_rgba(90,90,110,0.5)]" />
        <div className={`flex flex-col items-start pl-[17px] ${body}`}>
          {tools.map(([name, menu]) => (
            <ToolButton key={name} name={name} menu={menu} />
          ))}
        </div>
      </div>
    </section>
  );
}

const TRANSFORM_TOOLS = [['translate', true], ['mirror'], ['pattern', true], ['scale', true]];
const DRESSUP_TOOLS = [['fillet', true], ['chamfer'], ['draft', true], ['shell'], ['thickness'], ['thread'], ['removeFace', true]];
const SKETCH_TOOLS = [['pad'], ['pocket'], ['rib'], ['slot'], ['hole'], ['stiffener'], ['loft'], ['solidCombine'], ['closeSurface'], ['sew']];

function TransferArrow({ flip }) {
  return (
    <svg viewBox="0 0 90 24" className={`h-6 w-[90px] ${flip ? '-scale-x-100' : ''}`} aria-hidden="true">
      <path d="M2 9h68V2l18 10-18 10v-7H2z" fill="#fffa90" stroke="#27a0a8" strokeWidth="3" />
      <path d="M2 9h68V2l18 10-18 10v-7H2z" fill="#fffa90" stroke="#1b2050" strokeWidth="2" />
      <path d="M4 14h66" stroke="#1b4a70" strokeWidth="3" />
    </svg>
  );
}

const RAISED = 'border-t-4 border-r-4 border-b-4 border-l-4 border-t-[#f1f0fc] border-r-[#77758c] border-b-[#77758c] border-l-[#f1f0fc] bg-[#cfcde6]';

function CustomizeDialog() {
  const [tab, setTab] = useState('Start Menu');

  return (
    <section
      role="dialog"
      aria-label="Customize"
      className="absolute top-[254px] left-[880px] flex w-[1076px] flex-col shadow-[0_6px_22px_rgba(10,10,40,0.6)]"
    >
      <header className="flex h-16 items-center bg-white pr-9 pl-4">
        <h1 className="flex-1">Customize</h1>
        <button type="button" aria-label="Help" className="w-11 text-center">?</button>
        <button type="button" aria-label="Close window" className="ml-15 flex w-8 justify-center">
          <svg viewBox="0 0 22 22" className="size-[22px]" stroke="#222" strokeWidth="2" aria-hidden="true">
            <path d="M1 1l20 20M21 1L1 21" />
          </svg>
        </button>
      </header>

      <div className="relative flex flex-col overflow-hidden border-t border-[#d9cfc6] bg-linear-to-b from-[#eedfcf] via-[#f1e1c8] via-40% to-[#fde7bf] to-80% px-[21px] pt-[22px] pb-[17px]">
        <div role="tablist" className="flex h-[50px] items-start">
          {TABS.map((name) =>
            name === tab ? (
              <button
                key={name}
                type="button"
                role="tab"
                aria-selected="true"
                className="relative h-[58px] border-[5px] border-[#ea1320] px-[21px] pb-1.5"
              >
                {name}
              </button>
            ) : (
              <button
                key={name}
                type="button"
                role="tab"
                aria-selected="false"
                onClick={() => setTab(name)}
                className="mt-0.5 mr-1 h-[46px] border-t-2 border-r-4 border-t-[#fbf3ea] border-r-[#4a4440] px-[19px] pb-0.5"
              >
                {name}
              </button>
            ),
          )}
        </div>

        <div className="border-t-3 border-r-3 border-b-3 border-l-2 border-t-[#faf2e8] border-r-[#2e2a28] border-b-[#2e2a28] border-l-[#faf2e8] pr-2.5 pl-2.5">
          <div className="flex h-[55px] items-center pb-1.5">
            <h2 className="w-[490px] text-right">Available</h2>
            <h2 className="flex-1 text-right">Favorites</h2>
          </div>

          <div className="flex h-[450px]">
            <div className="flex w-[490px] flex-col border-2 border-[#9a9a9e] bg-white">
              <div className="flex min-h-0 flex-1">
                <ul className="flex flex-1 flex-col overflow-hidden pt-0.5 pb-2 pl-12">
                  {WORKBENCHES.map((name) => (
                    <li key={name} className="flex flex-1 items-center overflow-hidden whitespace-pre">
                      {name}
                    </li>
                  ))}
                </ul>
                <div className="flex w-9 flex-col items-center bg-[#f0f0f0] pt-4 text-[#505050]">
                  <Chevron className="h-3 w-4 rotate-180" />
                  <div className="mt-2.5 h-9 w-8 bg-[#cdcdcd]" />
                  <Chevron className="mt-auto mb-3.5 h-3 w-4" />
                </div>
              </div>
              <div className="flex h-9 items-start bg-[#f0f0f0] text-[#505050]">
                <Chevron className="mt-2.5 ml-3 h-3 w-4 rotate-90" />
                <div className="ml-2.5 h-8 w-[291px] bg-[#cdcdcd]" />
                <Chevron className="mt-2.5 ml-24 h-3 w-4 -rotate-90" />
              </div>
            </div>

            <div className="flex w-[106px] flex-col pt-[17px]">
              {['Add to favorites', 'Remove from favorites'].map((label, i) => (
                <button
                  key={label}
                  type="button"
                  aria-label={label}
                  className="flex h-15 items-center justify-center border-t-4 border-r-4 border-b-4 border-l-2 border-t-[#faf2e8] border-r-[#8a8682] border-b-[#8a8682] border-l-[#faf2e8]"
                >
                  <TransferArrow flip={i === 1} />
                </button>
              ))}
            </div>

            <ul className="flex-1 border-2 border-[#9a9a9e] bg-white pt-0.5 pl-1.5 leading-8">
              {FAVORITES.map((name) => (
                <li key={name}>{name}</li>
              ))}
            </ul>
          </div>

          <div className="mt-0.5 h-[5px] border-t-3 border-b-2 border-t-[#b9a9a0] border-b-[#fff3e0]" />

          <div className="mt-0.5 flex items-center justify-end">
            <label htmlFor="accelerator" className="pb-2 text-[#8b8270]">Accelerator:</label>
            <input id="accelerator" type="text" disabled className="h-[42px] w-[608px] border-2 border-[#dcd8d0] bg-[#f0f0f0]" />
          </div>

          <div className="mt-0.5 ml-[403px] flex h-11 gap-1 text-[#a9a7bf] [text-shadow:2px_2px_0_#f4f3fc]">
            <button type="button" disabled className={`w-[137px] ${RAISED}`}>Ctrl</button>
            <button type="button" disabled className={`w-[148px] ${RAISED}`}>Shift</button>
            <button type="button" disabled className={`w-32 ${RAISED}`}>Alt</button>
            <button type="button" disabled className={`flex-1 ${RAISED}`}>Other...</button>
          </div>

          <div className="mt-1 h-1 border-y-2 border-t-[#c4b6a2] border-b-[#fff3e0]" />

          <div className="flex h-[94px] items-start pt-2 pl-5">
            <svg viewBox="0 0 24 36" className="h-9 w-6" fill="none" aria-hidden="true">
              <path d="M4 12q1-9 9-8 9 1 7 9-1 3-7 7v4M13 30v6" stroke="#27a8a8" strokeWidth="7" />
              <path d="M3 11q1-9 9-8 9 1 7 9-1 3-7 7v4M12 29v6" stroke="#14105a" strokeWidth="5" />
            </svg>
            <p className="pt-2 pl-0.5 leading-8">
              Use this page to make up a list of your favorite workbenches.
              <br />
              These workbenches are shown at the top of the Start Menu.
            </p>
          </div>
        </div>

        <div className="flex justify-end pt-7">
          <button type="button" className="-mr-0.5 h-11 w-[126px] border-2 border-[#6b6a78] bg-[#cfcde6] shadow-[inset_3px_3px_0_#f1f0fc,inset_-3px_-3px_0_#8f8da6]">
            Close
          </button>
        </div>

        <div className="absolute bottom-0 left-0 h-18 w-28 bg-radial-[at_48%_80%] from-[#f58a3c] via-[#fbcf74] via-40% to-transparent to-70%" />
        <div className="absolute -bottom-[72px] -left-14 h-[116px] w-[150px] rounded-[50%] bg-radial-[at_80%_14%] from-[#8fd4ea] via-[#4a8ba6] via-25% to-[#2c3c48] to-50%" />
      </div>
    </section>
  );
}

function Viewport() {
  return (
    <main className="relative min-h-0 flex-1 overflow-hidden bg-linear-to-b from-[#353466] via-[#4a4876] via-60% to-[#abaac0]">
      <TreeLabels />
      <Compass />
      <AxisMark />
      <CustomizeDialog />
      <Palette title="T" place="top-[323px] right-[53px] w-[77px]" body="gap-5 pt-[22px] pb-3" tools={TRANSFORM_TOOLS} />
      <Palette title="S" place="top-[298px] right-0 w-[41px]" body="gap-[17px] pt-6 pb-1" tools={SKETCH_TOOLS} cut />
      <Palette title="D" place="top-[692px] right-[53px] w-[77px]" body="gap-[17px] pt-6 pb-2" tools={DRESSUP_TOOLS} />
      <p className="absolute right-40 bottom-0 text-[38px] leading-10 text-[#b0b0b8]">Activate Windows</p>
      <div className="absolute top-[1108px] right-0 flex h-[169px] w-[704px] items-center rounded-l-full border-3 border-black bg-[#f2f2f5]/80 pt-2 pl-[45px] font-[Inter] text-[64px] font-extrabold text-black">
        www.isopara.com
      </div>
    </main>
  );
}

function Group({ tools, gap = 'gap-4' }) {
  return (
    <div className={`flex shrink-0 pt-1 ${gap}`}>
      {tools.map(([name, menu]) => {
        if (name === 'formula') {
          return (
            <ToolButton key={name} name={name}>
              <span className="font-['Liberation_Serif'] text-[38px] font-bold italic">f</span>
              <span className="pt-2 text-[24px] font-semibold">(x)</span>
            </ToolButton>
          );
        }
        if (name === 'mean dimensions') {
          return (
            <ToolButton key={name} name={name}>
              <span className="flex flex-col font-['Liberation_Sans'] text-[20px] leading-6 font-bold text-black">
                <span>10<b className="text-[#1a1ae0]">,1</b></span>
                <span>10<b className="text-[#1a1ae0]">,0</b></span>
              </span>
            </ToolButton>
          );
        }
        return <ToolButton key={name} name={name} menu={menu} />;
      })}
    </div>
  );
}

function BottomToolbar() {
  return (
    <div className={`relative flex h-20 shrink-0 items-start overflow-hidden border-b-2 border-[#77758a] pt-2.5 pl-3.5 ${BAR_FILL}`}>
      <div className="flex items-center">
        <Group tools={[['camera']]} />
        <Separator />
        <Group tools={[['rulers']]} />
        <Separator />
        <Group tools={[['draftBlock'], ['curvature'], ['tapThread'], ['wallThickness']]} />
        <Separator />
        <Group gap="gap-5" tools={[['sketch', true], ['positionedSketch', true]]} />
        <Separator margin="mr-6 ml-8" />
        <Group
          tools={[['newFile'], ['openFile'], ['save'], ['print'], ['cut'], ['copy'], ['paste'], ['undo', true], ['redo', true], ['whatsThis']]}
        />
        <Separator />
        <Group tools={[['formula'], ['bubble'], ['trafficLight'], ['table', true], ['relations'], ['lock', true], ['equations']]} />
        <Separator margin="mr-4 ml-8" />
        <Group
          tools={[['update'], ['hand'], ['axes'], ['mean dimensions'], ['section', true], ['breakLink'], ['stack', true], ['body']]}
        />
        <div className="pt-3 pl-3.5">
          <ComboBox label="In work object" value="PartBody" width="w-[346px]" box={GREY_BOX} text="text-[#444]" />
        </div>
        <Separator margin="mr-5 ml-5" />
        <Group tools={[['ruler'], ['clamp'], ['weight']]} />
        <Separator />
        <Group tools={[['groove']]} />
        <Separator />
        <Group tools={[['plane']]} />
      </div>
      <p className="absolute top-3 right-4 text-[29px] text-[#8a8a96]/60">Go to Settings to Activate Windows.</p>
    </div>
  );
}

function StatusBar() {
  return (
    <footer className="shrink-0">
      <div className="flex h-[49px] items-center bg-[#cfcde6]">
        <p className="-ml-1 flex-1">object or a command</p>
        <input type="text" aria-label="Power input" className="h-[41px] w-[528px] border-2 border-[#8b8b92] bg-white" />
        <div className="h-10 w-[130px] self-end overflow-hidden border-2 border-r-0 border-[#88888c] bg-white pl-2 text-[25px] leading-9 whitespace-nowrap text-[#555]">
          No new no
        </div>
      </div>
      <div className="flex h-2 bg-[#1a1a1a]">
        <div className="w-[592px] bg-[#f3f3f5]" />
        <div className="ml-[1623px] w-[100px] bg-[#4a4a4a]" />
      </div>
    </footer>
  );
}

export default function App() {
  return (
    <div className="flex h-screen w-full flex-col overflow-hidden font-['Open_Sans','Noto_Sans',sans-serif] text-[24px] leading-8 text-[#2b2b2b]">
      <TopBars />
      <Viewport />
      <BottomToolbar />
      <StatusBar />
    </div>
  );
}
